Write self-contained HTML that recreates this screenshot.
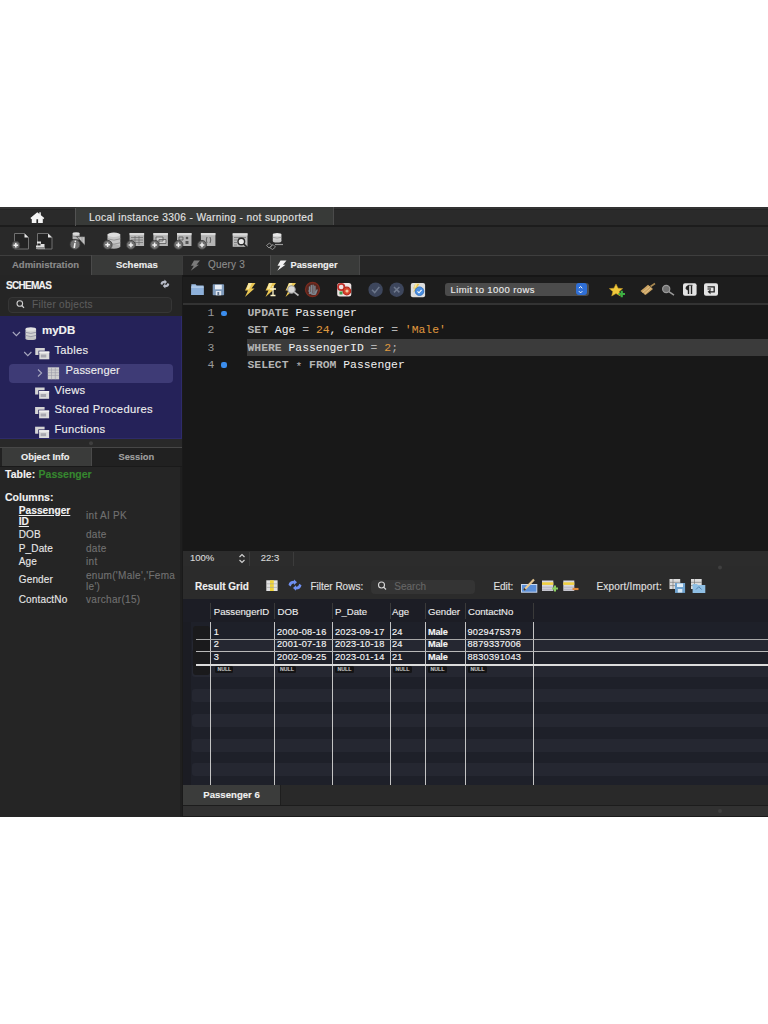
<!DOCTYPE html>
<html><head><meta charset="utf-8">
<style>
*{margin:0;padding:0;box-sizing:border-box}
html,body{width:768px;height:1024px;background:#fff;overflow:hidden;font-family:"Liberation Sans",sans-serif}
.a{position:absolute}
.t{position:absolute;white-space:nowrap;line-height:1;-webkit-text-stroke:0.12px currentColor}
svg.a{overflow:visible}
</style></head><body>
<div class="a" style="left:0px;top:207px;width:768px;height:610px;background:#242424;"></div>
<div class="a" style="left:0px;top:207px;width:768px;height:18px;background:#2a2a2a;"></div>
<div class="a" style="left:0px;top:225px;width:768px;height:1.5px;background:#1c1c1c;"></div>
<div class="a" style="left:0px;top:207px;width:768px;height:2px;background:#323232;"></div>
<div class="a" style="left:0px;top:209px;width:768px;height:1px;background:#252525;"></div>
<div class="a" style="left:76px;top:207px;width:257px;height:18px;background:#383a38;"></div>
<div class="a" style="left:333px;top:207px;width:1px;height:18px;background:#4a4a4a;"></div>
<div class="a" style="left:75px;top:208px;width:1px;height:18px;background:#525252;"></div>
<div class="t" style="left:89px;top:213.26px;font-size:10.2px;color:#e4e4e4;letter-spacing:0.35px;">Local instance 3306 - Warning - not supported</div>
<svg class="a" style="left:0px;top:0px" width="768" height="1024" viewBox="0 0 768 1024"><path d="M31.8 217.5 V223 H36.4 V219.2 H38.1 V223 H42.8 V217.5 L37.3 213.3 Z" fill="#f4f4f4"/><path d="M30.9 218.6 L37.3 213.2 L43.8 218.6" stroke="#f4f4f4" stroke-width="1.5" fill="none"/><rect x="39.3" y="212.3" width="1.5" height="2.8" fill="#f4f4f4"/></svg>
<div class="a" style="left:0px;top:226.5px;width:768px;height:28.5px;background:#292929;"></div>
<div class="a" style="left:0px;top:255px;width:768px;height:20px;background:#262626;"></div>
<div class="a" style="left:0px;top:254.5px;width:768px;height:1px;background:#3e3e3e;"></div>
<div class="a" style="left:92px;top:255.5px;width:90px;height:19.5px;background:#393a39;"></div>
<div class="a" style="left:271px;top:255.5px;width:88px;height:19.5px;background:#393a39;"></div>
<div class="a" style="left:91px;top:255px;width:1px;height:20px;background:#4a4a4a;"></div>
<div class="a" style="left:182px;top:255px;width:1px;height:20px;background:#3c3c3c;"></div>
<div class="a" style="left:270px;top:255px;width:1px;height:20px;background:#4a4a4a;"></div>
<div class="a" style="left:359px;top:255px;width:1px;height:20px;background:#474747;"></div>
<div class="a" style="left:183px;top:275px;width:585px;height:1.5px;background:#161616;"></div>
<div class="t" style="left:12px;top:260.46px;font-size:9.5px;color:#8c8c8c;font-weight:bold;">Administration</div>
<div class="t" style="left:116px;top:260.46px;font-size:9.5px;color:#eeeeee;font-weight:bold;">Schemas</div>
<div class="t" style="left:208px;top:260.03px;font-size:10px;color:#8c8c8c;letter-spacing:0.2px;">Query 3</div>
<div class="t" style="left:290.5px;top:260.63px;font-size:9.3px;color:#f0f0f0;font-weight:bold;">Passenger</div>
<div class="a" style="left:0px;top:275px;width:182px;height:542px;background:#252525;"></div>
<div class="a" style="left:182px;top:275px;width:1px;height:542px;background:#1a1a1a;"></div>
<div class="a" style="left:180px;top:467px;width:2px;height:350px;background:#1f1f1f;"></div>
<div class="t" style="left:6px;top:280.83px;font-size:10px;color:#f2f2f2;font-weight:bold;letter-spacing:-0.7px;">SCHEMAS</div>
<div class="a" style="left:8px;top:297px;width:164px;height:16px;background:#2a2a2a;border-radius:4px;border:1px solid #363636"></div>
<div class="t" style="left:32px;top:300.03px;font-size:10px;color:#5c5c5c;letter-spacing:0.3px;">Filter objects</div>
<div class="a" style="left:0px;top:316px;width:182px;height:123px;background:#252259;border-right:1px solid #2e2b6a;border-bottom:1px solid #2e2b6a"></div>
<div class="a" style="left:9px;top:364px;width:164px;height:19px;background:#3e3b76;border-radius:4px"></div>
<div class="t" style="left:42px;top:325.06px;font-size:11.5px;color:#f2f2f2;font-weight:bold;">myDB</div>
<div class="t" style="left:54.5px;top:344.92px;font-size:11.2px;color:#eeeeee;letter-spacing:0.25px;">Tables</div>
<div class="t" style="left:65.5px;top:365.02px;font-size:11.2px;color:#eeeeee;letter-spacing:0.1px;">Passenger</div>
<div class="t" style="left:54.5px;top:384.52px;font-size:11.2px;color:#eeeeee;letter-spacing:0.25px;">Views</div>
<div class="t" style="left:54.5px;top:404.42px;font-size:11.2px;color:#eeeeee;letter-spacing:0.3px;">Stored Procedures</div>
<div class="t" style="left:54.5px;top:423.52px;font-size:11.2px;color:#eeeeee;letter-spacing:0.25px;">Functions</div>
<div class="a" style="left:0px;top:439px;width:182px;height:8px;background:#292929;"></div>
<div class="a" style="left:0px;top:447px;width:182px;height:1px;background:#474747;"></div>
<div class="a" style="left:0px;top:448px;width:182px;height:18px;background:#212121;"></div>
<div class="a" style="left:2px;top:448px;width:89px;height:18px;background:#3a3b3a;"></div>
<div class="a" style="left:91px;top:448px;width:1px;height:18px;background:#4a4a4a;"></div>
<div class="a" style="left:0px;top:466px;width:182px;height:1px;background:#1a1a1a;"></div>
<div class="t" style="left:21px;top:452.63px;font-size:9.3px;color:#f0f0f0;font-weight:bold;">Object Info</div>
<div class="t" style="left:118.5px;top:452.63px;font-size:9.3px;color:#a0a0a0;font-weight:bold;">Session</div>
<div class="t" style="left:5px;top:469.11px;font-size:10.5px;color:#f2f2f2;font-weight:bold;">Table: </div>
<div class="t" style="left:38.6px;top:469.11px;font-size:10.5px;color:#36882f;font-weight:bold;">Passenger</div>
<div class="t" style="left:5px;top:491.61px;font-size:10.5px;color:#f2f2f2;font-weight:bold;">Columns:</div>
<div class="t" style="left:18.75px;top:505.86px;font-size:10.2px;color:#f2f2f2;font-weight:bold;text-decoration:underline">Passenger</div>
<div class="t" style="left:18.75px;top:517.06px;font-size:10.2px;color:#f2f2f2;font-weight:bold;text-decoration:underline">ID</div>
<div class="t" style="left:86px;top:510.73px;font-size:10px;color:#717171;letter-spacing:0.3px;">int AI PK</div>
<div class="t" style="left:18.75px;top:530.23px;font-size:10px;color:#e8e8e8;letter-spacing:0.15px;">DOB</div>
<div class="t" style="left:86px;top:530.23px;font-size:10px;color:#717171;letter-spacing:0.3px;">date</div>
<div class="t" style="left:18.75px;top:543.73px;font-size:10px;color:#e8e8e8;letter-spacing:0.15px;">P_Date</div>
<div class="t" style="left:86px;top:543.73px;font-size:10px;color:#717171;letter-spacing:0.3px;">date</div>
<div class="t" style="left:18.75px;top:556.73px;font-size:10px;color:#e8e8e8;letter-spacing:0.15px;">Age</div>
<div class="t" style="left:86px;top:556.73px;font-size:10px;color:#717171;letter-spacing:0.3px;">int</div>
<div class="t" style="left:18.75px;top:575.23px;font-size:10px;color:#e8e8e8;letter-spacing:0.15px;">Gender</div>
<div class="t" style="left:86px;top:570.73px;font-size:10px;color:#717171;letter-spacing:0.3px;">enum('Male','Fema</div>
<div class="t" style="left:86px;top:581.73px;font-size:10px;color:#717171;letter-spacing:0.3px;">le')</div>
<div class="t" style="left:18.75px;top:594.73px;font-size:10px;color:#e8e8e8;letter-spacing:0.15px;">ContactNo</div>
<div class="t" style="left:86px;top:594.73px;font-size:10px;color:#717171;letter-spacing:0.3px;">varchar(15)</div>
<div class="a" style="left:183px;top:276.5px;width:585px;height:26.5px;background:#1d1d1d;"></div>
<div class="a" style="left:183px;top:303px;width:585px;height:2px;background:#333333;"></div>
<div class="a" style="left:445px;top:283px;width:144px;height:13px;background:#4b4b4b;border-radius:3px"></div>
<div class="t" style="left:450.5px;top:284.66px;font-size:9.5px;color:#ececec;letter-spacing:0.4px;">Limit to 1000 rows</div>
<div class="a" style="left:576px;top:283px;width:11px;height:12px;background:#2f6fd6;border-radius:3px"></div>
<div class="a" style="left:183px;top:305px;width:585px;height:246.5px;background:#181818;"></div>
<div class="a" style="left:247px;top:339px;width:521px;height:17px;background:#3b3b3b;"></div>
<div class="t" style="left:207.5px;top:308.26px;font-size:11.4px;color:#9a9a9a;font-family:'Liberation Mono',monospace;-webkit-text-stroke:0;">1</div>
<div class="t" style="left:207.5px;top:325.46px;font-size:11.4px;color:#9a9a9a;font-family:'Liberation Mono',monospace;-webkit-text-stroke:0;">2</div>
<div class="t" style="left:207.5px;top:342.66px;font-size:11.4px;color:#9a9a9a;font-family:'Liberation Mono',monospace;-webkit-text-stroke:0;">3</div>
<div class="t" style="left:207.5px;top:359.86px;font-size:11.4px;color:#9a9a9a;font-family:'Liberation Mono',monospace;-webkit-text-stroke:0;">4</div>
<div class="a" style="left:221px;top:310.7px;width:5.6px;height:5.6px;background:#3b8ded;border-radius:2.2px"></div>
<div class="a" style="left:221px;top:362px;width:5.6px;height:5.6px;background:#3b8ded;border-radius:2.2px"></div>
<div class="t" style="left:247.5px;top:308.26px;font-size:11.4px;color:#b4b4b4;font-weight:bold;font-family:'Liberation Mono',monospace;-webkit-text-stroke:0;">UPDATE</div>
<div class="t" style="left:288.54px;top:308.26px;font-size:11.4px;color:#f0f0f0;font-family:'Liberation Mono',monospace;-webkit-text-stroke:0;">&nbsp;</div>
<div class="t" style="left:295.38px;top:308.26px;font-size:11.4px;color:#f0f0f0;font-family:'Liberation Mono',monospace;-webkit-text-stroke:0;">Passenger</div>
<div class="t" style="left:247.5px;top:325.46px;font-size:11.4px;color:#b4b4b4;font-weight:bold;font-family:'Liberation Mono',monospace;-webkit-text-stroke:0;">SET</div>
<div class="t" style="left:268.02px;top:325.46px;font-size:11.4px;color:#f0f0f0;font-family:'Liberation Mono',monospace;-webkit-text-stroke:0;">&nbsp;Age&nbsp;</div>
<div class="t" style="left:302.22px;top:325.46px;font-size:11.4px;color:#b4b4b4;font-family:'Liberation Mono',monospace;-webkit-text-stroke:0;">=</div>
<div class="t" style="left:309.06px;top:325.46px;font-size:11.4px;color:#f0f0f0;font-family:'Liberation Mono',monospace;-webkit-text-stroke:0;">&nbsp;</div>
<div class="t" style="left:315.9px;top:325.46px;font-size:11.4px;color:#e0993e;font-family:'Liberation Mono',monospace;-webkit-text-stroke:0;">24</div>
<div class="t" style="left:329.58px;top:325.46px;font-size:11.4px;color:#f0f0f0;font-family:'Liberation Mono',monospace;-webkit-text-stroke:0;">,&nbsp;Gender&nbsp;</div>
<div class="t" style="left:391.14px;top:325.46px;font-size:11.4px;color:#b4b4b4;font-family:'Liberation Mono',monospace;-webkit-text-stroke:0;">=</div>
<div class="t" style="left:397.98px;top:325.46px;font-size:11.4px;color:#f0f0f0;font-family:'Liberation Mono',monospace;-webkit-text-stroke:0;">&nbsp;</div>
<div class="t" style="left:404.82px;top:325.46px;font-size:11.4px;color:#e0993e;font-family:'Liberation Mono',monospace;-webkit-text-stroke:0;">'Male'</div>
<div class="t" style="left:247.5px;top:342.66px;font-size:11.4px;color:#b4b4b4;font-weight:bold;font-family:'Liberation Mono',monospace;-webkit-text-stroke:0;">WHERE</div>
<div class="t" style="left:281.7px;top:342.66px;font-size:11.4px;color:#f0f0f0;font-family:'Liberation Mono',monospace;-webkit-text-stroke:0;">&nbsp;PassengerID&nbsp;</div>
<div class="t" style="left:370.62px;top:342.66px;font-size:11.4px;color:#b4b4b4;font-family:'Liberation Mono',monospace;-webkit-text-stroke:0;">=</div>
<div class="t" style="left:377.46px;top:342.66px;font-size:11.4px;color:#f0f0f0;font-family:'Liberation Mono',monospace;-webkit-text-stroke:0;">&nbsp;</div>
<div class="t" style="left:384.3px;top:342.66px;font-size:11.4px;color:#e0993e;font-family:'Liberation Mono',monospace;-webkit-text-stroke:0;">2</div>
<div class="t" style="left:391.14px;top:342.66px;font-size:11.4px;color:#b4b4b4;font-family:'Liberation Mono',monospace;-webkit-text-stroke:0;">;</div>
<div class="t" style="left:247.5px;top:359.86px;font-size:11.4px;color:#b4b4b4;font-weight:bold;font-family:'Liberation Mono',monospace;-webkit-text-stroke:0;">SELECT</div>
<div class="t" style="left:288.54px;top:359.86px;font-size:11.4px;color:#f0f0f0;font-family:'Liberation Mono',monospace;-webkit-text-stroke:0;">&nbsp;</div>
<div class="t" style="left:295.38px;top:359.86px;font-size:11.4px;color:#b4b4b4;font-family:'Liberation Mono',monospace;-webkit-text-stroke:0;">&nbsp;</div>
<div class="t" style="left:302.22px;top:359.86px;font-size:11.4px;color:#f0f0f0;font-family:'Liberation Mono',monospace;-webkit-text-stroke:0;">&nbsp;</div>
<div class="t" style="left:309.06px;top:359.86px;font-size:11.4px;color:#b4b4b4;font-weight:bold;font-family:'Liberation Mono',monospace;-webkit-text-stroke:0;">FROM</div>
<div class="t" style="left:336.42px;top:359.86px;font-size:11.4px;color:#f0f0f0;font-family:'Liberation Mono',monospace;-webkit-text-stroke:0;">&nbsp;Passenger</div>
<div class="t" style="left:295.38px;top:362.06px;font-size:11.4px;color:#b4b4b4;font-family:'Liberation Mono',monospace;-webkit-text-stroke:0;">*</div>
<div class="a" style="left:183px;top:551px;width:585px;height:15px;background:#2c2c2c;"></div>
<div class="t" style="left:190px;top:553.46px;font-size:9.5px;color:#d8d8d8;">100%</div>
<svg class="a" style="left:238px;top:553px" width="8" height="11" viewBox="0 0 8 11"><path d="M1.5 4 L4 1.5 L6.5 4 M1.5 7 L4 9.5 L6.5 7" stroke="#cfcfcf" stroke-width="1.2" fill="none"/></svg>
<div class="a" style="left:249px;top:552px;width:1px;height:14px;background:#3c3c3c;"></div>
<div class="t" style="left:260.8px;top:553.46px;font-size:9.5px;color:#d8d8d8;">22:3</div>
<div class="a" style="left:293px;top:552px;width:1px;height:14px;background:#3c3c3c;"></div>
<div class="a" style="left:183px;top:566px;width:585px;height:33px;background:#2b2b2b;"></div>
<div class="t" style="left:195px;top:581.53px;font-size:10px;color:#f0f0f0;font-weight:bold;">Result Grid</div>
<div class="t" style="left:310.4px;top:581.73px;font-size:10px;color:#e0e0e0;">Filter Rows:</div>
<div class="a" style="left:371px;top:579.5px;width:104px;height:14px;background:#343434;border-radius:4px"></div>
<div class="t" style="left:394.3px;top:581.53px;font-size:10px;color:#666666;">Search</div>
<div class="t" style="left:493.4px;top:581.73px;font-size:10px;color:#e0e0e0;">Edit:</div>
<div class="t" style="left:596.4px;top:581.73px;font-size:10px;color:#e0e0e0;letter-spacing:0.2px;">Export/Import:</div>
<div class="a" style="left:183px;top:599px;width:585px;height:186px;background:#1e2029;"></div>
<div class="a" style="left:183px;top:599px;width:585px;height:23px;background:#1c1d25;"></div>
<div class="a" style="left:183px;top:622px;width:8px;height:163px;background:#1b1c23;"></div>
<div class="a" style="left:192px;top:639px;width:576px;height:12.5px;background:#252731;border-radius:3px 0 0 3px"></div>
<div class="a" style="left:192px;top:664px;width:576px;height:12.5px;background:#252731;border-radius:3px 0 0 3px"></div>
<div class="a" style="left:192px;top:689px;width:576px;height:12.5px;background:#252731;border-radius:3px 0 0 3px"></div>
<div class="a" style="left:192px;top:714px;width:576px;height:12.5px;background:#252731;border-radius:3px 0 0 3px"></div>
<div class="a" style="left:192px;top:739px;width:576px;height:12.5px;background:#252731;border-radius:3px 0 0 3px"></div>
<div class="a" style="left:192px;top:763px;width:576px;height:12.5px;background:#252731;border-radius:3px 0 0 3px"></div>
<div class="t" style="left:213.8px;top:606.87px;font-size:9.6px;color:#ececec;">PassengerID</div>
<div class="t" style="left:277.5px;top:606.87px;font-size:9.6px;color:#ececec;">DOB</div>
<div class="t" style="left:335px;top:606.87px;font-size:9.6px;color:#ececec;">P_Date</div>
<div class="t" style="left:392px;top:606.87px;font-size:9.6px;color:#ececec;">Age</div>
<div class="t" style="left:428px;top:606.87px;font-size:9.6px;color:#ececec;">Gender</div>
<div class="t" style="left:468px;top:606.87px;font-size:9.6px;color:#ececec;">ContactNo</div>
<div class="a" style="left:210px;top:603px;width:1px;height:16px;background:#3a3a3a;"></div>
<div class="a" style="left:274px;top:603px;width:1px;height:16px;background:#3a3a3a;"></div>
<div class="a" style="left:332px;top:603px;width:1px;height:16px;background:#3a3a3a;"></div>
<div class="a" style="left:390px;top:603px;width:1px;height:16px;background:#3a3a3a;"></div>
<div class="a" style="left:425px;top:603px;width:1px;height:16px;background:#3a3a3a;"></div>
<div class="a" style="left:465px;top:603px;width:1px;height:16px;background:#3a3a3a;"></div>
<div class="a" style="left:533px;top:603px;width:1px;height:16px;background:#3a3a3a;"></div>
<div class="a" style="left:193px;top:626px;width:17px;height:49px;background:#1a1a1c;border-radius:3px"></div>
<div class="a" style="left:210px;top:622px;width:1px;height:163px;background:#c4c4c4;"></div>
<div class="a" style="left:274px;top:622px;width:1px;height:163px;background:#c4c4c4;"></div>
<div class="a" style="left:332px;top:622px;width:1px;height:163px;background:#c4c4c4;"></div>
<div class="a" style="left:390px;top:622px;width:1px;height:163px;background:#c4c4c4;"></div>
<div class="a" style="left:425px;top:622px;width:1px;height:163px;background:#c4c4c4;"></div>
<div class="a" style="left:465px;top:622px;width:1px;height:163px;background:#c4c4c4;"></div>
<div class="a" style="left:533px;top:622px;width:1px;height:163px;background:#c4c4c4;"></div>
<div class="a" style="left:196px;top:638.5px;width:572px;height:1.5px;background:#a8a8a8;"></div>
<div class="a" style="left:196px;top:651px;width:572px;height:1px;background:#b8b8b8;"></div>
<div class="a" style="left:196px;top:663.5px;width:572px;height:2px;background:#dcdcdc;"></div>
<div class="t" style="left:213.8px;top:628.21px;font-size:9.2px;color:#f4f4f4;letter-spacing:0.25px;-webkit-text-stroke:0.15px #f4f4f4">1</div>
<div class="t" style="left:277px;top:628.21px;font-size:9.2px;color:#f4f4f4;letter-spacing:0.25px;-webkit-text-stroke:0.15px #f4f4f4">2000-08-16</div>
<div class="t" style="left:335px;top:628.21px;font-size:9.2px;color:#f4f4f4;letter-spacing:0.25px;-webkit-text-stroke:0.15px #f4f4f4">2023-09-17</div>
<div class="t" style="left:392px;top:628.21px;font-size:9.2px;color:#f4f4f4;letter-spacing:0.25px;-webkit-text-stroke:0.15px #f4f4f4">24</div>
<div class="t" style="left:428px;top:628.21px;font-size:9.2px;color:#f4f4f4;font-weight:bold;letter-spacing:-0.2px;">Male</div>
<div class="t" style="left:467.5px;top:628.21px;font-size:9.2px;color:#f4f4f4;letter-spacing:0.25px;-webkit-text-stroke:0.15px #f4f4f4">9029475379</div>
<div class="t" style="left:213.8px;top:640.41px;font-size:9.2px;color:#f4f4f4;letter-spacing:0.25px;-webkit-text-stroke:0.15px #f4f4f4">2</div>
<div class="t" style="left:277px;top:640.41px;font-size:9.2px;color:#f4f4f4;letter-spacing:0.25px;-webkit-text-stroke:0.15px #f4f4f4">2001-07-18</div>
<div class="t" style="left:335px;top:640.41px;font-size:9.2px;color:#f4f4f4;letter-spacing:0.25px;-webkit-text-stroke:0.15px #f4f4f4">2023-10-18</div>
<div class="t" style="left:392px;top:640.41px;font-size:9.2px;color:#f4f4f4;letter-spacing:0.25px;-webkit-text-stroke:0.15px #f4f4f4">24</div>
<div class="t" style="left:428px;top:640.41px;font-size:9.2px;color:#f4f4f4;font-weight:bold;letter-spacing:-0.2px;">Male</div>
<div class="t" style="left:467.5px;top:640.41px;font-size:9.2px;color:#f4f4f4;letter-spacing:0.25px;-webkit-text-stroke:0.15px #f4f4f4">8879337006</div>
<div class="t" style="left:213.8px;top:652.81px;font-size:9.2px;color:#f4f4f4;letter-spacing:0.25px;-webkit-text-stroke:0.15px #f4f4f4">3</div>
<div class="t" style="left:277px;top:652.81px;font-size:9.2px;color:#f4f4f4;letter-spacing:0.25px;-webkit-text-stroke:0.15px #f4f4f4">2002-09-25</div>
<div class="t" style="left:335px;top:652.81px;font-size:9.2px;color:#f4f4f4;letter-spacing:0.25px;-webkit-text-stroke:0.15px #f4f4f4">2023-01-14</div>
<div class="t" style="left:392px;top:652.81px;font-size:9.2px;color:#f4f4f4;letter-spacing:0.25px;-webkit-text-stroke:0.15px #f4f4f4">21</div>
<div class="t" style="left:428px;top:652.81px;font-size:9.2px;color:#f4f4f4;font-weight:bold;letter-spacing:-0.2px;">Male</div>
<div class="t" style="left:467.5px;top:652.81px;font-size:9.2px;color:#f4f4f4;letter-spacing:0.25px;-webkit-text-stroke:0.15px #f4f4f4">8830391043</div>
<div class="a" style="left:214.9px;top:666px;width:18.5px;height:7px;background:#141416;border-radius:1.5px"></div>
<div class="t" style="left:217.4px;top:667.40px;font-size:5.2px;color:#c0c0c0;font-weight:bold;">NULL</div>
<div class="a" style="left:277.5px;top:666px;width:18.5px;height:7px;background:#141416;border-radius:1.5px"></div>
<div class="t" style="left:280.0px;top:667.40px;font-size:5.2px;color:#c0c0c0;font-weight:bold;">NULL</div>
<div class="a" style="left:335px;top:666px;width:18.5px;height:7px;background:#141416;border-radius:1.5px"></div>
<div class="t" style="left:337.5px;top:667.40px;font-size:5.2px;color:#c0c0c0;font-weight:bold;">NULL</div>
<div class="a" style="left:393px;top:666px;width:18.5px;height:7px;background:#141416;border-radius:1.5px"></div>
<div class="t" style="left:395.5px;top:667.40px;font-size:5.2px;color:#c0c0c0;font-weight:bold;">NULL</div>
<div class="a" style="left:428px;top:666px;width:18.5px;height:7px;background:#141416;border-radius:1.5px"></div>
<div class="t" style="left:430.5px;top:667.40px;font-size:5.2px;color:#c0c0c0;font-weight:bold;">NULL</div>
<div class="a" style="left:468px;top:666px;width:18.5px;height:7px;background:#141416;border-radius:1.5px"></div>
<div class="t" style="left:470.5px;top:667.40px;font-size:5.2px;color:#c0c0c0;font-weight:bold;">NULL</div>
<div class="a" style="left:183px;top:785px;width:585px;height:20px;background:#292929;"></div>
<div class="a" style="left:183px;top:785px;width:97px;height:20px;background:#3b3c3b;"></div>
<div class="a" style="left:280px;top:785px;width:1px;height:20px;background:#1e1e1e;"></div>
<div class="t" style="left:203.3px;top:789.67px;font-size:9.6px;color:#f0f0f0;font-weight:bold;">Passenger 6</div>
<div class="a" style="left:183px;top:805px;width:585px;height:1px;background:#1c1c1c;"></div>
<div class="a" style="left:183px;top:806px;width:585px;height:10px;background:#313131;"></div>
<div class="a" style="left:183px;top:816px;width:585px;height:1px;background:#1a1a1a;"></div>
<svg class="a" style="left:0px;top:226px" width="768" height="28" viewBox="0 0 768 28"><path d="M14.5 233.5 H24.5 L28.5 237.5 V249 H14.5 Z" fill="#232323" stroke="#707070" stroke-width="1" transform="translate(0,-226)"/><path d="M24.5 233.5 L28.5 237.5 H24.5 Z" fill="#e8e8e8" transform="translate(0,-226)"/><circle cx="15.8" cy="19.3" r="4" fill="#6e6e6e" stroke="#3a3a3a" stroke-width="0.8"/><path d="M13.5 19.3 H18.1 M15.8 17.0 V21.6" stroke="#f0f0f0" stroke-width="1.5"/><path d="M37.5 233.5 H48 L52 237.5 V249 H37.5 Z" fill="#232323" stroke="#707070" stroke-width="1" transform="translate(0,-226)"/><path d="M48 233.5 L52 237.5 H48 Z" fill="#e8e8e8" transform="translate(0,-226)"/><path d="M37 15.5 H41 V18 H44.5 V21.5 H36 V19.5 H40.5 V17.5 H37 Z" fill="#e0e0e0"/><rect x="36" y="21.5" width="9" height="1.6" fill="#9a9a9a"/><rect x="72.6" y="7.5" width="7" height="5" fill="#c4c4c4"/><ellipse cx="76.1" cy="7.5" rx="3.5" ry="1.2" fill="#dedede"/><ellipse cx="76.1" cy="12.5" rx="3.5" ry="1.2" fill="#b4b4b4"/><path d="M72.6 10 Q76.1 11.3 79.6 10" stroke="#6a6a6a" stroke-width="0.7" fill="none"/><path d="M76.5 10.6 H85 V19.6 Z" fill="#c0c0c0" stroke="#262626" stroke-width="0.6"/><path d="M79 10.6 V13 M82 10.6 V16" stroke="#8a8a8a" stroke-width="0.6"/><circle cx="75" cy="18.4" r="5" fill="#707070" stroke="#3a3a3a" stroke-width="0.8"/><path d="M75.4 15.4 V15.5 M74.9 17.5 L74.3 21.3" stroke="#f4f4f4" stroke-width="1.6" stroke-linecap="round"/><rect x="107.5" y="8.5" width="12.8" height="12" fill="#c6c6c6"/><ellipse cx="113.9" cy="8.8" rx="6.4" ry="2.2" fill="#dedede"/><ellipse cx="113.9" cy="20.5" rx="6.4" ry="2.2" fill="#b0b0b0"/><path d="M107.5 12.8 Q113.9 15.5 120.3 12.8 M107.5 16.8 Q113.9 19.5 120.3 16.8" stroke="#8a8a8a" stroke-width="0.8" fill="none"/><circle cx="107.6" cy="18.8" r="4.5" fill="#6e6e6e" stroke="#3a3a3a" stroke-width="0.8"/><path d="M105.3 18.8 H109.89999999999999 M107.6 16.5 V21.1" stroke="#f0f0f0" stroke-width="1.5"/><rect x="129.6" y="7" width="14.5" height="13" fill="#b4b4b4"/><rect x="129.6" y="7" width="14.5" height="2.2" fill="#d8d8d8"/><rect x="153.4" y="7" width="14.5" height="13" fill="#b4b4b4"/><rect x="153.4" y="7" width="14.5" height="2.2" fill="#d8d8d8"/><rect x="177" y="7" width="14.5" height="13" fill="#b4b4b4"/><rect x="177" y="7" width="14.5" height="2.2" fill="#d8d8d8"/><rect x="200.9" y="7" width="14.5" height="13" fill="#b4b4b4"/><rect x="200.9" y="7" width="14.5" height="2.2" fill="#d8d8d8"/><path d="M131 11.5 H143 M131 14 H143 M131 16.5 H143 M135 10 V19 M139 10 V19" stroke="#6a6a6a" stroke-width="0.7"/><path d="M156 11 H163 V15 H156 Z M159 13.5 H166 V17.5 H159 Z" stroke="#555" stroke-width="0.8" fill="#d0d0d0"/><path d="M179 11 H183 V14 H179 Z" stroke="#555" stroke-width="0.8" fill="none"/><circle cx="187" cy="12" r="1.3" fill="#555"/><rect x="185.5" y="15" width="3" height="3" fill="#555"/><path d="M207 11 Q205.5 14 207 17 M210 11 Q211.5 14 210 17" stroke="#555" stroke-width="0.9" fill="none"/><circle cx="130.9" cy="18.9" r="4.5" fill="#6e6e6e" stroke="#3a3a3a" stroke-width="0.8"/><path d="M128.6 18.9 H133.20000000000002 M130.9 16.599999999999998 V21.2" stroke="#f0f0f0" stroke-width="1.5"/><circle cx="154.6" cy="18.9" r="4.5" fill="#6e6e6e" stroke="#3a3a3a" stroke-width="0.8"/><path d="M152.29999999999998 18.9 H156.9 M154.6 16.599999999999998 V21.2" stroke="#f0f0f0" stroke-width="1.5"/><circle cx="178.4" cy="18.9" r="4.5" fill="#6e6e6e" stroke="#3a3a3a" stroke-width="0.8"/><path d="M176.1 18.9 H180.70000000000002 M178.4 16.599999999999998 V21.2" stroke="#f0f0f0" stroke-width="1.5"/><circle cx="202" cy="18.9" r="4.5" fill="#6e6e6e" stroke="#3a3a3a" stroke-width="0.8"/><path d="M199.7 18.9 H204.3 M202 16.599999999999998 V21.2" stroke="#f0f0f0" stroke-width="1.5"/><rect x="232.7" y="7.3" width="14.8" height="13.5" fill="#bdbdbd"/><rect x="232.7" y="7.3" width="14.8" height="2.2" fill="#dcdcdc"/><path d="M234 11.5 H246 M234 14 H237 M234 16.5 H237 M234 19 H237" stroke="#6a6a6a" stroke-width="0.7"/><circle cx="241.3" cy="15.5" r="3.3" fill="#e8e8e8" stroke="#2a2a2a" stroke-width="1.4"/><path d="M243.6 17.8 L247.3 21.3" stroke="#2a2a2a" stroke-width="1.6"/><rect x="272.8" y="8.5" width="8.6" height="6.5" fill="#d4d4d4"/><ellipse cx="277.1" cy="8.5" rx="4.3" ry="1.5" fill="#e8e8e8"/><ellipse cx="277.1" cy="15" rx="4.3" ry="1.5" fill="#c8c8c8"/><path d="M272.8 11.3 Q277.1 13 281.4 11.3" stroke="#8a8a8a" stroke-width="0.7" fill="none"/><path d="M266.5 19.5 L269.5 17 L272 19.5 L269 22 Z M269.5 21.5 L273 18.5 L275.5 21 L272.5 23.5 Z" stroke="#9a9a9a" stroke-width="0.9" fill="none"/><path d="M275 18.5 H283" stroke="#9a9a9a" stroke-width="1.2"/></svg>
<svg class="a" style="left:183px;top:276px" width="585" height="26" viewBox="0 0 585 26"><path d="M8.3 8.3 H12.6 L13.6 9.5 H20.6 V19 H8.3 Z" fill="#9dbde3"/><rect x="8.3" y="10.5" width="12.3" height="8.5" fill="#8db0da"/><rect x="8.3" y="10.5" width="12.3" height="1.2" fill="#bcd3ee"/><rect x="29.7" y="8.2" width="11.4" height="11.1" fill="#7e9abb" rx="0.8"/><rect x="32" y="8.8" width="6.8" height="4.5" fill="#e8eef5"/><rect x="32.8" y="15" width="5.4" height="4.3" fill="#e0e6ee"/><rect x="34.4" y="16" width="1.8" height="3" fill="#5a6f8a"/><g transform="translate(61,6.9) scale(1.0)"><path d="M4.5 0 H11.5 L7.5 5.5 H10.5 L1 14 L4 7.5 H1 Z" fill="#e9c653"/><path d="M4.5 0 H8 L5 6.3 H2.5 Z" fill="#f7e7a2"/></g><g transform="translate(81.5,6.9) scale(1.0)"><path d="M4.5 0 H11.5 L7.5 5.5 H10.5 L1 14 L4 7.5 H1 Z" fill="#e9c653"/><path d="M4.5 0 H8 L5 6.3 H2.5 Z" fill="#f7e7a2"/></g><path d="M87 13 H93 M90 10 V19.5 M87.5 19.5 H92.5" stroke="#fff6c8" stroke-width="1.3"/><g transform="translate(101.5,6.9) scale(1.0)"><path d="M4.5 0 H11.5 L7.5 5.5 H10.5 L1 14 L4 7.5 H1 Z" fill="#e9c653"/><path d="M4.5 0 H8 L5 6.3 H2.5 Z" fill="#f7e7a2"/></g><circle cx="108.5" cy="13.5" r="3.7" fill="#d8d8d8" stroke="#9a9a9a" stroke-width="1.1"/><path d="M111.2 16.2 L115.5 19.5" stroke="#bcbcbc" stroke-width="1.6"/><circle cx="129.5" cy="13.5" r="7" fill="#55261f" stroke="#7a2a1e" stroke-width="1.3"/><path d="M126.5 17.5 V11 M128.3 17 V9.5 M130.1 17 V9.3 M131.9 17 V10.2 M126 15 Q128 19.5 132.5 18 L134 14" stroke="#7e8892" stroke-width="1.4" fill="none" stroke-linecap="round"/><rect x="154.2" y="6.9" width="14.1" height="13.7" rx="2.5" fill="#efe4e4"/><circle cx="158.2" cy="11" r="3.2" fill="none" stroke="#c0302a" stroke-width="1.8"/><circle cx="163.8" cy="15" r="3.8" fill="#d8452c" stroke="#b5281c" stroke-width="1.2"/><circle cx="164" cy="15" r="1.6" fill="#f0c8a0"/><rect x="156.5" y="15.5" width="3" height="3" fill="#3b9a4a"/><circle cx="192.6" cy="13.7" r="7.2" fill="#3d465c"/><path d="M189 13.8 L191.7 16.6 L196.3 10.9" stroke="#6e788c" stroke-width="1.5" fill="none"/><circle cx="213.7" cy="13.7" r="7.2" fill="#3d465c"/><path d="M211 11 L216.4 16.4 M216.4 11 L211 16.4" stroke="#6e788c" stroke-width="1.5"/><rect x="227.8" y="7" width="14.3" height="14.2" rx="2" fill="#dedede"/><g transform="translate(229.5,7.8) scale(0.62)"><path d="M4.5 0 H11.5 L7.5 5.5 H10.5 L1 14 L4 7.5 H1 Z" fill="#e9c653"/><path d="M4.5 0 H8 L5 6.3 H2.5 Z" fill="#f7e7a2"/></g><circle cx="236.5" cy="15.2" r="4.3" fill="#4a8ee0" stroke="#2f6fc0" stroke-width="0.8"/><path d="M234.5 15.3 L236 16.8 L238.6 13.8" stroke="#ffffff" stroke-width="1.1" fill="none"/><path d="M395.9 12.2 L397.6 10.5 L399.3 12.2 M395.9 15.2 L397.6 16.9 L399.3 15.2" stroke="#ffffff" stroke-width="1" fill="none"/><path d="M433 8 L435.1 12.2 L439.7 12.6 L436.2 15.6 L437.3 20 L433 17.6 L428.7 20 L429.8 15.6 L426.3 12.6 L430.9 12.2 Z" fill="#f0c93c" stroke="#c89a20" stroke-width="0.5"/><path d="M435.5 18 H442 M438.75 14.8 V21.3" stroke="#3cb043" stroke-width="2.2"/><path d="M457.5 15 L465 8.8 L470 13 L462.5 19 Z" fill="#c9a262"/><path d="M459.5 16.5 L466.5 10.5 M461.5 18 L468.3 12" stroke="#e8c890" stroke-width="0.8"/><path d="M467.5 10.5 L472 7.5" stroke="#a88850" stroke-width="1.6"/><circle cx="483.2" cy="13" r="3.6" fill="#727272" stroke="#9a9a9a" stroke-width="1.2"/><path d="M485.9 15.7 L491 19.2" stroke="#9a9a9a" stroke-width="1.5"/><rect x="500" y="7.3" width="13.6" height="12.4" rx="2" fill="#e4e4e4"/><path d="M505.5 9.5 V18 M508.5 9.5 V18" stroke="#222" stroke-width="1.4"/><path d="M505.5 9.3 H509.5 M505.5 9.5 Q502.5 10.5 503 12.5 Q503.5 14 505.5 14 Z" fill="#222" stroke="#222" stroke-width="0.8"/><rect x="521" y="7.3" width="14" height="12.4" rx="2" fill="#e4e4e4"/><path d="M524.5 10.8 H531.2 V15.8 H527" stroke="#222" stroke-width="1.3" fill="none"/><path d="M527.5 13.4 L524.6 15.8 L527.5 18.2 Z" fill="#222"/><path d="M524.5 13 H528" stroke="#222" stroke-width="1.1"/></svg>
<svg class="a" style="left:0px;top:0px" width="768" height="1024" viewBox="0 0 768 1024"><path d="M194 260.5 H200 L196.5 264.8 H199 L190.8 270.8 L193.8 265.8 H191 Z" fill="#7a7a7a"/><path d="M280.5 260.5 H286.5 L283 264.8 H285.5 L277.3 270.8 L280.3 265.8 H277.5 Z" fill="#f2f2f2"/><path d="M160.5 284 Q161 280.8 164.5 280.8 L164.5 279.6 L167 282 L164.5 284.4 L164.5 283 Q162.5 283 162.3 285 Z" fill="#b8bcc8"/><path d="M169.3 284 Q168.8 287.2 165.3 287.2 L165.3 288.4 L162.8 286 L165.3 283.6 L165.3 285 Q167.3 285 167.5 283 Z" fill="#b8bcc8"/><circle cx="19.8" cy="303.5" r="2.8" fill="none" stroke="#d0d0d0" stroke-width="1.1"/><path d="M21.8 305.5 L24 307.8" stroke="#d0d0d0" stroke-width="1.2"/><path d="M12.8 332 L16.4 335.6 L20 332" stroke="#a8a8c0" stroke-width="1.1" fill="none"/><path d="M24.2 352 L27.8 355.6 L31.4 352" stroke="#a8a8c0" stroke-width="1.1" fill="none"/><path d="M38 369.5 L41.6 373 L38 376.5" stroke="#a8a8c0" stroke-width="1.1" fill="none"/><rect x="25.5" y="329" width="10.6" height="9.5" fill="#d2d2d2"/><ellipse cx="30.8" cy="329" rx="5.3" ry="1.8" fill="#e4e4e4"/><ellipse cx="30.8" cy="338.5" rx="5.3" ry="1.6" fill="#c4c4c4"/><path d="M25.5 332.3 Q30.8 334.5 36.1 332.3 M25.5 335.5 Q30.8 337.7 36.1 335.5" stroke="#8a8a9a" stroke-width="0.8" fill="none"/><rect x="47.8" y="367.3" width="11.3" height="12" fill="#cfcfcf"/><path d="M47.8 370 H59.1 M47.8 372.7 H59.1 M47.8 375.4 H59.1 M51.5 367.3 V379.3 M55.3 367.3 V379.3" stroke="#9a9aa8" stroke-width="0.6"/></svg>
<svg class="a" style="left:0px;top:0px" width="768" height="1024" viewBox="0 0 768 1024"><g transform="translate(35.3,347.5)"><rect x="0" y="0.5" width="9.5" height="7" fill="#d4d4d4"/><rect x="3.2" y="3.2" width="10.8" height="8.3" fill="#252259"/><rect x="4" y="4" width="10" height="7.8" fill="#dcdcdc"/><rect x="4" y="4" width="10" height="1.6" fill="#f0f0f0"/><rect x="5.5" y="7" width="5.5" height="3" fill="#a8a8b0"/></g><g transform="translate(35.1,387)"><rect x="0" y="0.5" width="9.5" height="7" fill="#d4d4d4"/><rect x="3.2" y="3.2" width="10.8" height="8.3" fill="#252259"/><rect x="4" y="4" width="10" height="7.8" fill="#dcdcdc"/><rect x="4" y="4" width="10" height="1.6" fill="#f0f0f0"/><rect x="5.5" y="7" width="5.5" height="3" fill="#a8a8b0"/></g><g transform="translate(35.1,406.5)"><rect x="0" y="0.5" width="9.5" height="7" fill="#d4d4d4"/><rect x="3.2" y="3.2" width="10.8" height="8.3" fill="#252259"/><rect x="4" y="4" width="10" height="7.8" fill="#dcdcdc"/><rect x="4" y="4" width="10" height="1.6" fill="#f0f0f0"/><rect x="5.5" y="7" width="5.5" height="3" fill="#a8a8b0"/></g><g transform="translate(35.1,426.2)"><rect x="0" y="0.5" width="9.5" height="7" fill="#d4d4d4"/><rect x="3.2" y="3.2" width="10.8" height="8.3" fill="#252259"/><rect x="4" y="4" width="10" height="7.8" fill="#dcdcdc"/><rect x="4" y="4" width="10" height="1.6" fill="#f0f0f0"/><rect x="5.5" y="7" width="5.5" height="3" fill="#a8a8b0"/></g></svg>
<svg class="a" style="left:0px;top:0px" width="768" height="1024" viewBox="0 0 768 1024"><circle cx="91" cy="443.3" r="2" fill="#3f3f3f"/><circle cx="720" cy="567.5" r="2" fill="#3f3f3f"/><circle cx="720" cy="811" r="2" fill="#3f3f3f"/></svg>
<svg class="a" style="left:0px;top:0px" width="768" height="1024" viewBox="0 0 768 1024"><rect x="266.3" y="580.3" width="11.3" height="10.7" fill="#e2e2e2"/><rect x="270" y="580.3" width="3.8" height="10.7" fill="#f0d43a"/><path d="M266.3 583.8 H277.6 M266.3 587.4 H277.6" stroke="#a0a0a0" stroke-width="0.6"/><path d="M288.5 585 Q289.3 580.8 294 580.8 L294 579.5 L297 582.3 L294 585 L294 583.5 Q291.3 583.5 290.8 586.5 Z" fill="#6f8ff0"/><path d="M301.5 585.2 Q300.7 589.4 296 589.4 L296 590.7 L293 587.9 L296 585.2 L296 586.7 Q298.7 586.7 299.2 583.7 Z" fill="#6f8ff0"/><circle cx="381.5" cy="585" r="3" fill="none" stroke="#d8d8d8" stroke-width="1.1"/><path d="M383.6 587.1 L386 589.5" stroke="#d8d8d8" stroke-width="1.2"/><rect x="521.5" y="584.5" width="15.3" height="7.7" fill="#5b8fd8" stroke="#c8d8ee" stroke-width="1"/><path d="M524 590 L534 579.5" stroke="#e8c890" stroke-width="2.2"/><path d="M524 590 L525.2 588.8" stroke="#333" stroke-width="2.2"/><rect x="542" y="580.5" width="11.3" height="10.4" fill="#d8d8e0"/><rect x="542" y="582.3" width="11.3" height="2.6" fill="#f0d040"/><path d="M542 587.2 H553.3 M542 589.3 H553.3" stroke="#9a9aa8" stroke-width="0.6"/><path d="M552 588.5 H558 M555 585.5 V591.5" stroke="#8cd060" stroke-width="2"/><rect x="563.3" y="580.5" width="11" height="10.4" fill="#d8d8e0"/><rect x="563.3" y="582.3" width="11" height="2.6" fill="#f0d040"/><path d="M563.3 587.2 H574.3 M563.3 589.3 H574.3" stroke="#9a9aa8" stroke-width="0.6"/><path d="M572.5 589 H578.5" stroke="#e0883a" stroke-width="2.2"/><rect x="669.5" y="579" width="10.7" height="10" fill="#dcdcdc"/><path d="M669.5 582.3 H680.2 M669.5 585.6 H680.2 M673 579 V589" stroke="#7a7a7a" stroke-width="0.7"/><rect x="675" y="583" width="10.1" height="9.9" fill="#6fa3d0"/><rect x="677" y="583.5" width="6" height="3.5" fill="#e0eef8"/><rect x="677.8" y="589" width="4.5" height="3.5" fill="#d8e8f4"/><rect x="691" y="579" width="10.7" height="10" fill="#dcdcdc"/><path d="M691 582.3 H701.7 M691 585.6 H701.7 M694.5 579 V589" stroke="#7a7a7a" stroke-width="0.7"/><path d="M692.6 584 H697 L698 585 H705.3 V592.9 H692.6 Z" fill="#8fbfe4"/><path d="M696 589.5 L698.8 586.7 L701.6 589.5" stroke="#4a7aa8" stroke-width="0.9" fill="none"/></svg>
</body></html>
